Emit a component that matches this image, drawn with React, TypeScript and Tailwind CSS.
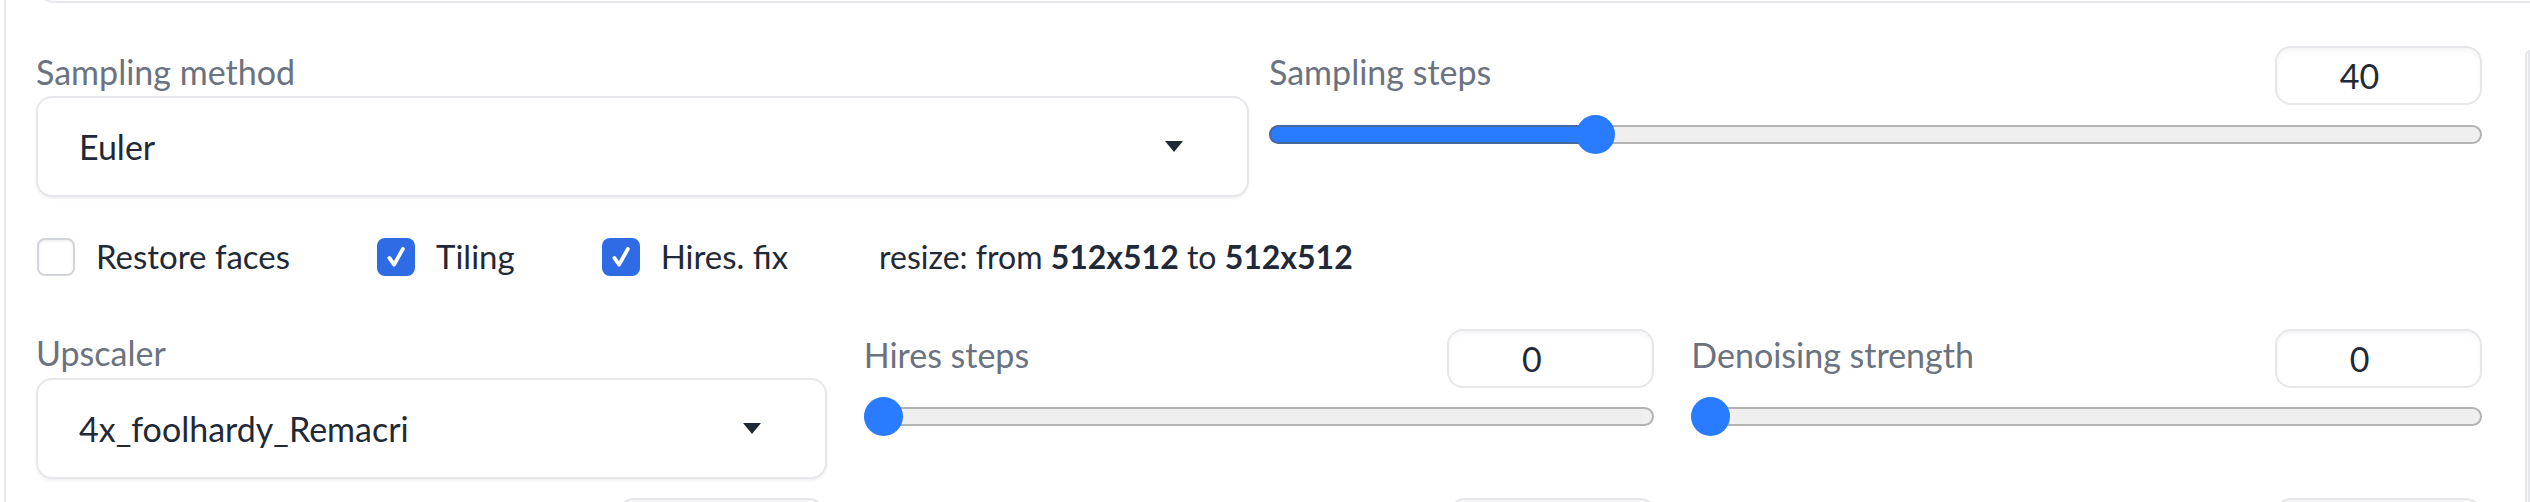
import React from 'react';

const Label = ({ children }: { children: React.ReactNode }) => (
  <div className="text-[34px] leading-[40px] text-[#6b7280]">{children}</div>
);

const NumberBox = ({ value }: { value?: string }) => (
  <div className="flex h-[59px] w-[207px] shrink-0 items-center justify-center rounded-[16px] border-2 border-[#e5e7eb] bg-white pr-[38px] text-[34px] text-[#1f2937] shadow-[inset_0_3px_4px_rgba(0,0,0,0.04)]">
    {value}
  </div>
);

const Slider = ({ value, min, max }: { value: number; min: number; max: number }) => {
  const pct = (value - min) / (max - min);
  return (
    <div className="relative h-[39px]">
      <div className="absolute inset-x-0 top-[10px] h-[19px] rounded-full border-2 border-[#b3b3b3] bg-[#efefef]" />
      {pct > 0 && (
        <div
          className="absolute left-0 top-[10px] h-[19px] rounded-l-full border-2 border-r-0 border-[#46689f] bg-[#297cff]"
          style={{ width: `calc(${pct} * (100% - 39px) + 19px)` }}
        />
      )}
      <div
        className="absolute top-0 h-[39px] w-[39px] rounded-full bg-[#297cff]"
        style={{ left: `calc(${pct} * (100% - 39px))` }}
      />
    </div>
  );
};

const Dropdown = ({ value }: { value: string }) => (
  <div className="flex h-[101px] items-center justify-between rounded-[16px] border-2 border-[#e5e7eb] bg-white pl-[41px] pr-[64px] shadow-[0_2px_3px_rgba(0,0,0,0.06)]">
    <span className="text-[34px] text-[#1f2937]">{value}</span>
    <svg width="18" height="11" viewBox="0 0 18 11">
      <path d="M0 0H18L9 11Z" fill="#1f2937" />
    </svg>
  </div>
);

const Checkbox = ({ checked, label }: { checked: boolean; label: string }) => (
  <label className="flex items-center gap-[21px]">
    {checked ? (
      <span className="flex h-[38px] w-[38px] items-center justify-center rounded-[8px] bg-[#2f6be4]">
        <svg width="38" height="38" viewBox="0 0 16 16" fill="none">
          <path d="M5.2 8.4l2 2.8L10.9 4.6" stroke="white" strokeWidth="1.6" strokeLinecap="round" strokeLinejoin="round" />
        </svg>
      </span>
    ) : (
      <span className="h-[38px] w-[38px] rounded-[8px] border-2 border-[#d1d5db] bg-white shadow-[inset_0_2px_3px_rgba(0,0,0,0.06)]" />
    )}
    <span className="text-[33px] text-[#1f2937]">{label}</span>
  </label>
);

const SliderField = ({ label, value, min, max, gap }: { label: string; value: number; min: number; max: number; gap: string }) => (
  <div className="flex-1">
    <div className="flex h-[59px] items-start justify-between">
      <div className="pt-[6px]">
        <Label>{label}</Label>
      </div>
      <NumberBox value={String(value)} />
    </div>
    <div className={gap}>
      <Slider value={value} min={min} max={max} />
    </div>
  </div>
);

export default function App() {
  return (
    <div className="h-[502px] w-[2530px] overflow-hidden bg-white pl-[4px] font-['Lato',sans-serif]">
      <div className="flex h-full flex-col border-l-2 border-[#e5e7eb] pl-[30px]">
        <div className="-mr-[20px] -mt-[32px] h-[35px] shrink-0 rounded-b-[18px] border-2 border-[#e5e7eb]" />
        <div className="flex">
          <div className="w-[2446px] shrink-0">
            {/* sampler */}
            <div className="mt-[43px] flex gap-[20px]">
              <div className="flex-1 pt-[6px]">
                <Label>Sampling method</Label>
                <div className="mt-[4px]">
                  <Dropdown value="Euler" />
                </div>
              </div>
              <SliderField label="Sampling steps" value={40} min={1} max={150} gap="mt-[10px]" />
            </div>

            {/* options */}
            <div className="ml-[1px] mt-[40px] flex h-[40px] items-center gap-[87px]">
              <Checkbox checked={false} label="Restore faces" />
              <Checkbox checked label="Tiling" />
              <Checkbox checked label="Hires. fix" />
              <span className="ml-[4px] text-[32px] text-[#1f2937]">
                resize: from <b className="font-bold">512x512</b> to <b className="font-bold">512x512</b>
              </span>
            </div>

            {/* hires */}
            <div className="mt-[52px] flex gap-[37px]">
              <div className="flex-1 pt-[4px]">
                <Label>Upscaler</Label>
                <div className="mt-[5px]">
                  <Dropdown value="4x_foolhardy_Remacri" />
                </div>
              </div>
              <SliderField label="Hires steps" value={0} min={0} max={150} gap="mt-[9px]" />
              <SliderField label="Denoising strength" value={0} min={0} max={1} gap="mt-[9px]" />
            </div>

            {/* next row, only its top edge is in view */}
            <div className="mt-[19px] flex gap-[37px]">
              <div className="flex flex-1 justify-end pr-[4px]">
                <NumberBox />
              </div>
              <div className="flex flex-1 justify-end">
                <NumberBox />
              </div>
              <div className="flex flex-1 justify-end">
                <NumberBox />
              </div>
            </div>
          </div>
          <div className="ml-[43px] mt-[47px] h-[500px] flex-1 rounded-tl-[16px] border-2 border-[#e5e7eb] bg-[#fafafa]" />
        </div>
      </div>
    </div>
  );
}
